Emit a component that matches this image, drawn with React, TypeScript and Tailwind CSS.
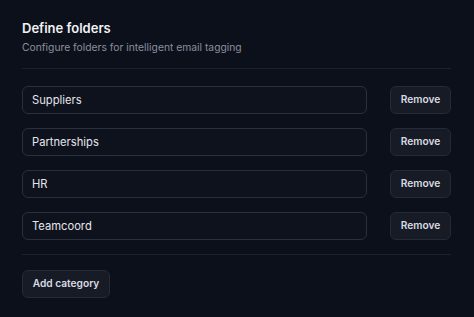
import { useState } from 'react'

const App = () => {
  const [folders, set_folders] = useState(['Suppliers', 'Partnerships', 'HR', 'Teamcoord'])

  return (
    <div className="w-[474px] h-[317px] bg-[#0c101b] text-white overflow-hidden" style={{ fontFamily: 'Inter, "Noto Sans", sans-serif' }}>
      <div className="pl-[22px] pr-[23px] pt-[18px]">
        <h2 className="text-[13px] leading-[20px] font-semibold text-[#f1f2f5]">Define folders</h2>
        <p className="mt-[1px] text-[10.3px] leading-[16px] text-[#8a8f9c]">Configure folders for intelligent email tagging</p>
        <div className="mt-[13px] h-px bg-[#1c2130]" />
        <div className="mt-[17px] flex flex-col gap-[14px]">
          {folders.map((f, i) => (
            <div key={i} className="flex items-center gap-[23px]">
              <input
                value={f}
                onChange={(e) => set_folders(folders.map((x, j) => (j === i ? e.target.value : x)))}
                className="w-[345px] h-[28px] rounded-[6px] border border-[#2a2f3d] bg-[#0e121d] pl-[9px] text-[11.2px] text-[#e4e6eb] outline-none"
              />
              <button
                onClick={() => set_folders(folders.filter((_, j) => j !== i))}
                className="w-[61px] h-[28px] rounded-[6px] border border-[#252a37] bg-[#171b26] text-[10.2px] font-semibold text-[#d8dbe2]"
              >
                Remove
              </button>
            </div>
          ))}
        </div>
        <div className="mt-[14px] h-px bg-[#1c2130]" />
        <button
          onClick={() => set_folders([...folders, ''])}
          className="mt-[15px] w-[88px] h-[28px] rounded-[6px] border border-[#252a37] bg-[#171b26] text-[10.2px] font-semibold text-[#d8dbe2]"
        >
          Add category
        </button>
      </div>
    </div>
  )
}

export default App
